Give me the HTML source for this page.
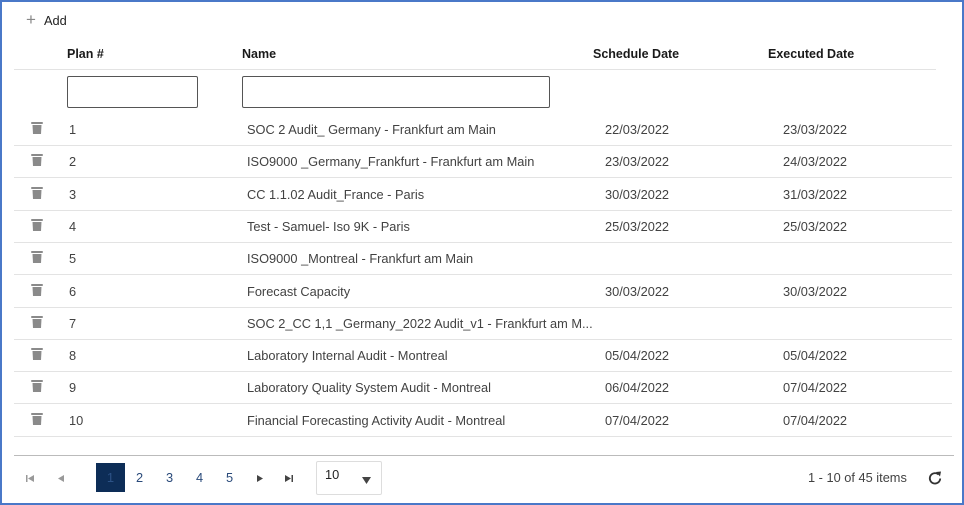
<!DOCTYPE html><html><head><style>
body{margin:0;width:964px;height:505px;position:relative;font-family:"Liberation Sans",sans-serif;background:#fff;overflow:hidden}
.frame{position:absolute;left:0;top:0;width:960px;height:501px;border:2px solid #4a78c8}
.a{position:absolute;white-space:nowrap}
.t{font-size:12.8px;color:#424242}
.h{font-size:12.5px;font-weight:bold;color:#1a1a1a}
.line{position:absolute;height:1px;background:#e3e3e3}
.in{position:absolute;border:1px solid #555;border-radius:2px;height:30px}
</style></head><body>
<div class="frame"></div>
<div class="a" style="left:26px;top:11px;font-size:17px;color:#888;line-height:17px">+</div>
<div class="a t" style="left:44px;top:13px;color:#222">Add</div>
<div class="a h" style="left:67px;top:47px">Plan #</div>
<div class="a h" style="left:242px;top:47px">Name</div>
<div class="a h" style="left:593px;top:47px">Schedule Date</div>
<div class="a h" style="left:768px;top:47px">Executed Date</div>
<div class="line" style="left:14px;top:69px;width:922px"></div>
<div class="in" style="left:67px;top:76px;width:129px"></div>
<div class="in" style="left:242px;top:76px;width:306px"></div>
<div id="rows"></div>
<div class="line" style="left:14px;top:455px;width:940px;background:#bbb"></div>
<svg class="a" style="left:26px;top:474px" width="10" height="10"><rect x="0" y="1" width="1.5" height="7" fill="#999"/><polygon points="8,1 2,4.5 8,8" fill="#999"/></svg>
<svg class="a" style="left:57px;top:474px" width="10" height="10"><polygon points="7,1 1,4.5 7,8" fill="#999"/></svg>
<div class="a" style="left:96px;top:463px;width:29px;height:29px;background:#0d2d57;color:#2c5286;font-size:13px;text-align:center;line-height:29px">1</div>
<div class="a t" style="left:136px;top:470px;color:#2a4a7a">2</div>
<div class="a t" style="left:166px;top:470px;color:#2a4a7a">3</div>
<div class="a t" style="left:196px;top:470px;color:#2a4a7a">4</div>
<div class="a t" style="left:226px;top:470px;color:#2a4a7a">5</div>
<svg class="a" style="left:256px;top:474px" width="10" height="10"><polygon points="1,1 7,4.5 1,8" fill="#444"/></svg>
<svg class="a" style="left:285px;top:474px" width="10" height="10"><polygon points="0,1 6,4.5 0,8" fill="#444"/><rect x="6.5" y="1" width="1.5" height="7" fill="#444"/></svg>
<div class="a" style="left:316px;top:461px;width:64px;height:32px;border:1px solid #ddd;border-radius:2px"></div>
<div class="a t" style="left:325px;top:467px;color:#222">10</div>
<svg class="a" style="left:362px;top:477px" width="10" height="8"><polygon points="0,0 9,0 4.5,7" fill="#444"/></svg>
<div class="a t" style="left:808px;top:470px">1 - 10 of 45 items</div>
<svg class="a" style="left:927px;top:470px" width="16" height="16" viewBox="0 0 16 16"><path d="M11.5 4.5 A5.2 5.2 0 1 0 13.2 8.5" fill="none" stroke="#333" stroke-width="1.8"/><polygon points="9,2 14,1.5 13,6.5" fill="#333"/></svg>
<script>
var d=[["1","SOC 2 Audit_ Germany - Frankfurt am Main","22/03/2022","23/03/2022"],["2","ISO9000 _Germany_Frankfurt - Frankfurt am Main","23/03/2022","24/03/2022"],["3","CC 1.1.02 Audit_France - Paris","30/03/2022","31/03/2022"],["4","Test - Samuel- Iso 9K - Paris","25/03/2022","25/03/2022"],["5","ISO9000 _Montreal - Frankfurt am Main","",""],["6","Forecast Capacity","30/03/2022","30/03/2022"],["7","SOC 2_CC 1,1 _Germany_2022 Audit_v1 - Frankfurt am M...","",""],["8","Laboratory Internal Audit - Montreal","05/04/2022","05/04/2022"],["9","Laboratory Quality System Audit - Montreal","06/04/2022","07/04/2022"],["10","Financial Forecasting Activity Audit - Montreal","07/04/2022","07/04/2022"]];
var h="";d.forEach(function(r,i){var y=121+i*32.3;
h+='<svg class="a" style="left:30px;top:'+(y+0)+'px" width="14" height="14" viewBox="0 0 14 14"><rect x="1" y="1" width="12" height="2" rx="1" fill="#8a8a8a"/><path d="M2.5 4 H11.5 L11 13 H3 Z" fill="#8a8a8a"/></svg>';
h+='<div class="a t" style="left:69px;top:'+(y+1)+'px">'+r[0]+'</div>';
h+='<div class="a t" style="left:247px;top:'+(y+1)+'px">'+r[1]+'</div>';
h+='<div class="a t" style="left:605px;top:'+(y+1)+'px">'+r[2]+'</div>';
h+='<div class="a t" style="left:783px;top:'+(y+1)+'px">'+r[3]+'</div>';
h+='<div class="line" style="left:14px;top:'+(y+24)+'px;width:938px"></div>';});
document.getElementById("rows").innerHTML=h;
</script>
</body></html>
